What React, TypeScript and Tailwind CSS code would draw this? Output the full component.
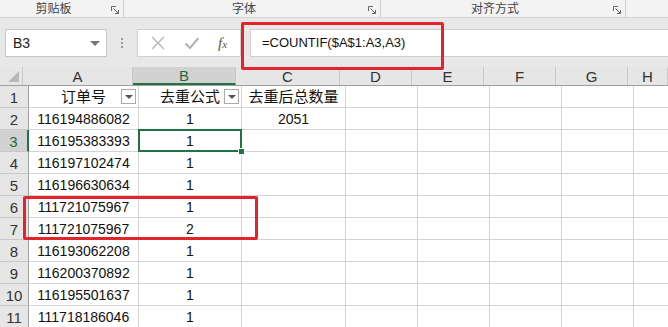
import React from 'react';

const cols = [
  { key: 'A', w: 110 },
  { key: 'B', w: 103 },
  { key: 'C', w: 104 },
  { key: 'D', w: 72 },
  { key: 'E', w: 72 },
  { key: 'F', w: 72 },
  { key: 'G', w: 72 },
  { key: 'H', w: 40 },
];

const rows: string[][] = [
  ['订单号', '去重公式', '去重后总数量'],
  ['116194886082', '1', '2051'],
  ['116195383393', '1', ''],
  ['116197102474', '1', ''],
  ['116196630634', '1', ''],
  ['111721075967', '1', ''],
  ['111721075967', '2', ''],
  ['116193062208', '1', ''],
  ['116200370892', '1', ''],
  ['116195501637', '1', ''],
  ['111718186046', '1', ''],
];

const font = { fontFamily: '"Liberation Sans", "Noto Sans CJK SC", sans-serif' };

// little dialog launcher in the ribbon group label bar
const Launcher = () => (
  <svg width="9" height="9" viewBox="0 0 9 9" className="text-[#666]">
    <path d="M0.5 5V0.5H5" fill="none" stroke="currentColor" />
    <path d="M2.5 2.5L7.5 7.5M7.5 4V7.5H4" fill="none" stroke="currentColor" />
  </svg>
);

const FilterButton = () => (
  <div className="absolute right-[2px] bottom-[3px] flex h-[15px] w-[15px] items-center justify-center border border-[#ababab] bg-white">
    <div className="h-0 w-0 border-x-[4px] border-t-[4px] border-x-transparent border-t-[#555]" />
  </div>
);

function RibbonGroup({ label, w, labelW }: { label: string; w: number; labelW: number }) {
  return (
    <div className="flex h-full items-center border-r border-[#d0d0d0]" style={{ width: w }}>
      <span className="text-center text-[12px] text-[#444]" style={{ width: labelW }}>
        {label}
      </span>
      <div className="flex flex-1 items-center justify-center pt-[4px]">
        <Launcher />
      </div>
    </div>
  );
}

export default function App() {
  return (
    <div className="relative h-[327px] w-[668px] overflow-hidden bg-white" style={font}>
      {/* ribbon group labels */}
      <div className="flex h-[18px] border-b border-[#d5d5d5] bg-[#f3f3f3]">
        <RibbonGroup label="剪贴板" w={124} labelW={107} />
        <RibbonGroup label="字体" w={257} labelW={240} />
        <RibbonGroup label="对齐方式" w={245} labelW={228} />
      </div>

      {/* formula bar */}
      <div className="flex h-[49px] items-start bg-[#e8e8e8] pt-[11px]">
        <div className="ml-[5px] flex h-[28px] w-[102px] items-center justify-between border border-[#c6c6c6] bg-white pl-[7px] pr-[6px]">
          <span className="text-[14px] text-[#222]">B3</span>
          <div className="h-0 w-0 border-x-[5px] border-t-[5px] border-x-transparent border-t-[#777]" />
        </div>
        <div className="flex h-[28px] w-[30px] flex-col items-center justify-center gap-[2px]">
          <div className="h-[2px] w-[2px] bg-[#999]" />
          <div className="h-[2px] w-[2px] bg-[#999]" />
          <div className="h-[2px] w-[2px] bg-[#999]" />
        </div>
        <div className="flex h-[28px] w-[104px] items-center border border-[#d0d0d0] bg-white">
          <svg width="14" height="14" viewBox="0 0 14 14" className="ml-[13px]">
            <path d="M1 1L13 13M13 1L1 13" fill="none" stroke="#b4b4b4" strokeWidth="1.4" />
          </svg>
          <svg width="16" height="14" viewBox="0 0 16 14" className="ml-[19px]">
            <path d="M1.5 7.5L6 12L14.5 2" fill="none" stroke="#b4b4b4" strokeWidth="2" />
          </svg>
          <span className="ml-[18px] text-[15px] italic text-[#555]" style={{ fontFamily: '"Liberation Serif", serif' }}>
            f<span className="text-[11px]">x</span>
          </span>
        </div>
        <div className="ml-[9px] flex h-[28px] flex-1 items-center border-y border-l border-[#d0d0d0] bg-white pl-[11px]">
          <span className="text-[13px] text-[#111]">=COUNTIF($A$1:A3,A3)</span>
        </div>
      </div>

      {/* sheet */}
      <div className="flex flex-col">
        <div className="flex h-[19px] border-b border-[#a0a0a0] bg-[#e6e6e6]">
          <div className="flex w-[29px] items-end justify-end border-r border-[#c8c8c8] p-[3px]">
            <div className="h-0 w-0 border-b-[11px] border-l-[11px] border-b-[#b9b9b9] border-l-transparent" />
          </div>
          {cols.map((c) => (
            <div
              key={c.key}
              className={
                'flex shrink-0 items-center justify-center border-r border-[#c8c8c8] text-[15px] leading-none ' +
                (c.key === 'B' ? 'border-b-2 border-b-[#217346] bg-[#d2d2d2] text-[#1e6b3e]' : 'text-[#333]')
              }
              style={{ width: c.w }}
            >
              {c.key}
            </div>
          ))}
        </div>

        {rows.map((r, i) => (
          <div key={i} className="flex h-[22px]">
            <div
              className={
                'flex w-[29px] shrink-0 items-end justify-center border-b border-[#c8c8c8] pb-[1px] text-[15px] leading-4 ' +
                (i === 2 ? 'border-r-2 border-r-[#217346] bg-[#d2d2d2] text-[#1e6b3e]' : 'border-r border-r-[#a0a0a0] bg-[#e6e6e6] text-[#333]')
              }
            >
              {i + 1}
            </div>
            {cols.map((c, j) => (
              <div
                key={c.key}
                className={
                  'relative flex shrink-0 items-end justify-center border-r border-b border-[#d4d4d4] pb-[2px] leading-4 text-[#111] ' +
                  (i === 0 && j < 3 ? 'text-[15px]' : 'text-[14px]')
                }
                style={{ width: c.w }}
              >
                {r[j] ?? ''}
                {i === 0 && j < 2 && <FilterButton />}
                {i === 2 && j === 1 && (
                  <>
                    <div className="absolute -top-[1px] -left-[1px] -right-[1px] -bottom-[1px] border-2 border-[#217346]" />
                    <div className="absolute -right-[4px] -bottom-[4px] z-10 h-[7px] w-[7px] border border-white bg-[#217346]" />
                  </>
                )}
              </div>
            ))}
          </div>
        ))}
      </div>

      {/* red annotation boxes */}
      <div className="pointer-events-none absolute left-[241px] top-[22px] h-[48px] w-[203px] rounded-[2px] border-[3px] border-[#e5232b]" />
      <div className="pointer-events-none absolute left-[23px] top-[196px] h-[44px] w-[235px] rounded-[2px] border-[3px] border-[#e5232b]" />
    </div>
  );
}
